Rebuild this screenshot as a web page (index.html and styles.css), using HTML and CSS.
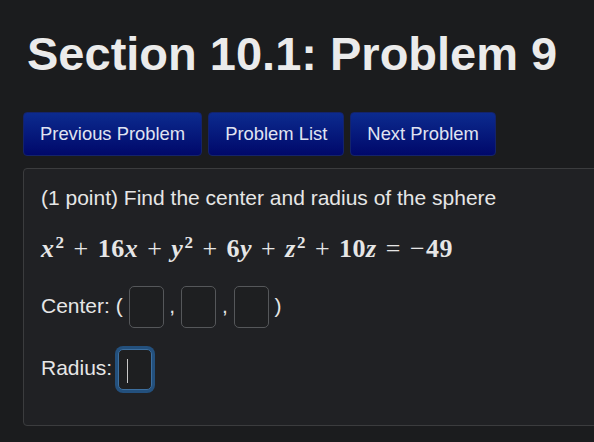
FILE: index.html
```html
<!DOCTYPE html>
<html lang="en">
<head>
    <meta charset="UTF-8">
    <meta name="viewport" content="width=device-width, initial-scale=1.0">
    <title>Section 10.1: Problem 9</title>
    <link rel="stylesheet" href="styles.css">
</head>
<body>

    <h1 class="page-title">Section 10.1: Problem 9</h1>

    <div class="nav-buttons">
        <button class="nav-btn">Previous Problem</button>
        <button class="nav-btn">Problem List</button>
        <button class="nav-btn">Next Problem</button>
    </div>

    <div class="problem">
        <p class="statement">(1 point) Find the center and radius of the sphere</p>

        <p class="math"><i>x</i><sup>2</sup><span class="op">+</span>16<i>x</i><span class="op">+</span><i>y</i><sup>2</sup><span class="op">+</span>6<i>y</i><span class="op">+</span><i>z</i><sup>2</sup><span class="op">+</span>10<i>z</i><span class="op">=</span><span class="minus">&minus;</span>49</p>

        <div class="answer-row">Center: ( <input type="text" class="answer"> , <input type="text" class="answer"> , <input type="text" class="answer"> )</div>

        <div class="answer-row radius-row">Radius: <span class="focus-wrap"><input type="text" class="answer focused"><span class="caret"></span></span></div>
    </div>

</body>
</html>
```

FILE: styles.css
```css
body {
    font-family: "Liberation Sans", Arial, sans-serif;
    font-size: 21px;
    background-color: #1b1c1e;
    color: #e6e6e6;
    margin: 0;
    padding: 0 0 0 23px;
    overflow: hidden;
}

.page-title {
    font-size: 47px;
    font-weight: bold;
    color: #ebebeb;
    margin: 26px 0 0 4px;
    line-height: 56px;
}

.nav-buttons {
    display: flex;
    gap: 6px;
    margin-top: 30px;
}

.nav-btn {
    height: 44px;
    padding: 0 16px;
    font-family: inherit;
    font-size: 18.4px;
    color: #e0e4f2;
    background: linear-gradient(to bottom, #0c2b8e, #00086a);
    border: 1px solid #14236a;
    border-radius: 4px;
}

.problem {
    margin-top: 12px;
    width: 600px;
    height: 258px;
    background-color: #202124;
    border: 1px solid #3b3c3e;
    border-radius: 4px;
    padding: 0 0 0 17px;
    box-sizing: border-box;
}

.statement {
    margin: 17px 0 0 0;
    line-height: 24px;
}

/* equation, drawn like MathJax bold */
.math {
    margin: 22px 0 0 0;
    font-family: "Liberation Serif", "DejaVu Serif", serif;
    font-weight: bold;
    font-size: 26px;
    line-height: 34px;
    letter-spacing: 0.5px;
    white-space: nowrap;
}

.math sup {
    font-size: 17px;
    vertical-align: 9px;
    line-height: 0;
    margin-left: 1px;
}

.math .op {
    margin: 0 9px;
    font-weight: normal;
}

.math .minus {
    font-weight: normal;
    margin-right: 1px;
}

.answer-row {
    height: 42px;
    line-height: 42px;
    margin-top: 19px;
}

.radius-row {
    margin-top: 20px;
}

.answer {
    width: 35px;
    height: 42px;
    box-sizing: border-box;
    vertical-align: middle;
    background-color: #1e1f21;
    border: 1px solid #55575a;
    border-radius: 5px;
    margin: 0;
    padding: 0;
}

.focus-wrap {
    position: relative;
    display: inline-block;
    vertical-align: middle;
    line-height: 0;
}

.answer.focused {
    width: 34px;
    height: 41px;
    border: 1px solid #3d6f9f;
    box-shadow: 0 0 0 3px #23507d;
    outline: none;
}

.caret {
    position: absolute;
    left: 9px;
    top: 10px;
    width: 1px;
    height: 24px;
    background-color: #c8c8c8;
}
```
